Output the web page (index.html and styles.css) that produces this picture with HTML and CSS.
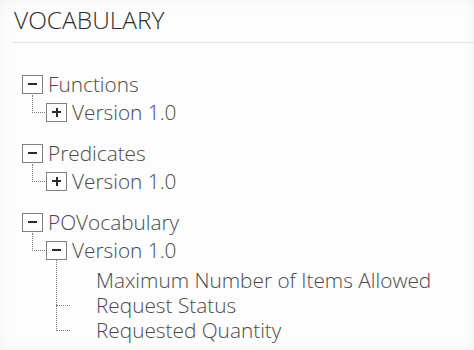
FILE: index.html
```html
<!DOCTYPE html>
<html>
<head>
<meta charset="utf-8">
<link rel="stylesheet" href="styles.css">
</head>
<body>
<div class="panel">
  <h1 class="title">VOCABULARY</h1>
  <ul class="tree">
    <li class="group">
      <div class="row"><span class="tog minus"></span><span class="label">Functions</span></div>
      <ul class="children">
        <li class="child"><div class="row"><span class="tog plus"></span><span class="label">Version 1.0</span></div></li>
      </ul>
    </li>
    <li class="group">
      <div class="row"><span class="tog minus"></span><span class="label">Predicates</span></div>
      <ul class="children">
        <li class="child"><div class="row"><span class="tog plus"></span><span class="label">Version 1.0</span></div></li>
      </ul>
    </li>
    <li class="group">
      <div class="row"><span class="tog minus"></span><span class="label">POVocabulary</span></div>
      <ul class="children">
        <li class="child">
          <div class="row"><span class="tog minus"></span><span class="label">Version 1.0</span></div>
          <ul class="leaves">
            <li class="leaf first">Maximum Number of Items Allowed</li>
            <li class="leaf">Request Status</li>
            <li class="leaf">Requested Quantity</li>
          </ul>
        </li>
      </ul>
    </li>
  </ul>
</div>
</body>
</html>
```
FILE: styles.css
```css
html, body {
  margin: 0;
  padding: 0;
  background: #f6f6f6;
}
.panel {
  height: 350px;
  box-sizing: border-box;
  background: #fdfdfd;
  box-shadow: inset 0 0 14px rgba(0, 0, 0, 0.05);
  font-family: "Open Sans", "Noto Sans", sans-serif;
  overflow: hidden;
}
.title {
  margin: 0 0 0 12px;
  padding: 6px 0 8px 2px;
  font-size: 24.5px;
  line-height: 28px;
  font-weight: 340;
  color: #2e2e2e;
  border-bottom: 1px solid #e4e4e4;
}
.tree {
  list-style: none;
  margin: 0;
  padding: 27px 0 0 22px;
}
.group + .group {
  margin-top: 13px;
}
.children, .leaves {
  list-style: none;
  margin: 0;
  padding: 0;
}
.child {
  position: relative;
  padding-left: 24px;
}
.child::before {
  content: "";
  position: absolute;
  left: 10px;
  top: -3px;
  width: 14px;
  height: 17px;
  border-left: 1px dotted #7a7a7a;
  border-bottom: 1px dotted #7a7a7a;
}
.row {
  display: flex;
  align-items: center;
  height: 28px;
}
.tog {
  position: relative;
  width: 21px;
  height: 19px;
  box-sizing: border-box;
  border: 1px solid #808080;
  background: #fff;
  margin-right: 5px;
  flex: none;
}
.tog::before, .plus::after {
  content: "";
  position: absolute;
  left: 5px;
  top: 7.5px;
  width: 9px;
  height: 2px;
  background: #2a2a2a;
}
.plus::after {
  left: 8.5px;
  top: 4px;
  width: 2px;
  height: 9px;
}
.label {
  font-size: 20.8px;
  line-height: 28px;
  font-weight: 350;
  color: #4a4a4a;
  white-space: nowrap;
}
.leaves {
  position: relative;
  margin-top: 4px;
  padding-left: 50px;
}
.leaves::before {
  content: "";
  position: absolute;
  left: 10px;
  top: -8px;
  bottom: 12px;
  border-left: 1px dotted #7a7a7a;
}
.leaf {
  position: relative;
  height: 25px;
  font-size: 20.8px;
  line-height: 25px;
  font-weight: 350;
  color: #4a4a4a;
  white-space: nowrap;
}
.leaf::after {
  content: "";
  position: absolute;
  left: -40px;
  top: 12px;
  width: 14px;
  border-top: 1px dotted #7a7a7a;
}
.leaf.first::after {
  display: none;
}
```
